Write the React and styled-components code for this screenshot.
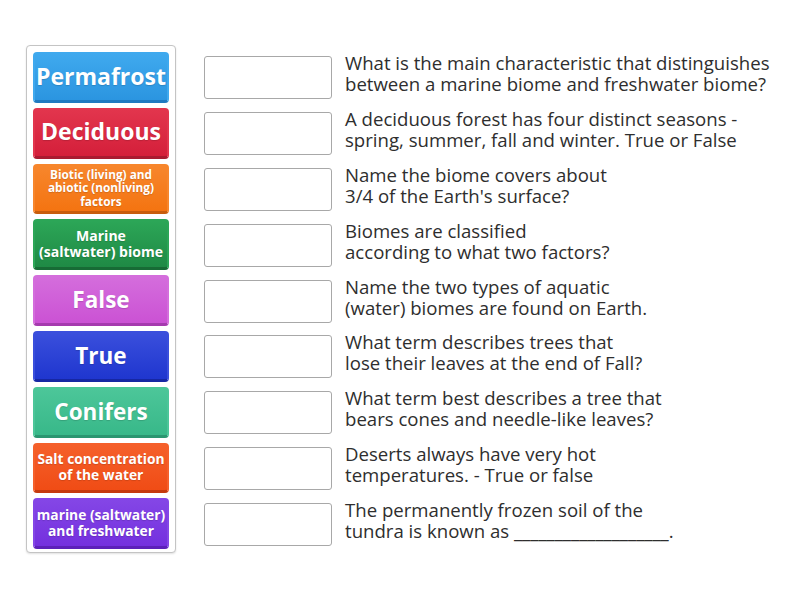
import React from "react";
import styled, { createGlobalStyle } from "styled-components";

const GlobalStyle = createGlobalStyle`
  body {
    margin: 0;
    background: #fff;
    font-family: "Open Sans", "Noto Sans", sans-serif;
  }
`;

const Page = styled.div`
  width: 800px;
  height: 600px;
  display: flex;
  align-items: flex-start;
  padding: 45px 0 0 26px;
  box-sizing: border-box;
`;

const Panel = styled.div`
  width: 150px;
  box-sizing: border-box;
  border: 1px solid #c4c4c4;
  border-radius: 4px;
  box-shadow: 0 1px 2px rgba(0, 0, 0, 0.12);
  padding: 6px 6px 3px 6px;
  display: flex;
  flex-direction: column;
  gap: 5px;
  background: #fff;
`;

const Tile = styled.div`
  height: 50.8px;
  box-sizing: border-box;
  border-radius: 4px;
  background: linear-gradient(180deg, ${({ top }) => top} 0%, ${({ color }) => color} 100%);
  border: 2px solid ${({ top }) => top};
  border-bottom: 3px solid ${({ dark }) => dark};
  color: #fff;
  font-weight: 700;
  font-size: ${({ size }) => size}px;
  line-height: ${({ size }) => (size > 18 ? 1.2 : 1.15)};
  display: flex;
  align-items: center;
  justify-content: center;
  text-align: center;
  white-space: pre-line;
  padding: 0 0 1px 0;
  text-shadow: 0 1px 1px rgba(0, 0, 0, 0.15);
`;

const Questions = styled.div`
  margin-left: 28px;
  padding-top: 7px;
  display: flex;
  flex-direction: column;
  gap: 5px;
`;

const Row = styled.div`
  height: 50.8px;
  display: flex;
  align-items: center;
`;

const Slot = styled.div`
  width: 128px;
  height: 43px;
  box-sizing: border-box;
  border: 1px solid #a8a8a8;
  border-radius: 3px;
  background: #fff;
  flex-shrink: 0;
  margin-top: 1px;
`;

const Question = styled.div`
  margin-left: 13px;
  font-size: 18.6px;
  line-height: 21px;
  color: #2e2e2e;
  white-space: pre;
  margin-bottom: 8px;
`;

const tiles = [
  { text: "Permafrost", size: 23, color: "#2b95e0", top: "#3fa9ee", dark: "#2079c0" },
  { text: "Deciduous", size: 23, color: "#d41f3a", top: "#e2354d", dark: "#a91a30" },
  { text: "Biotic (living) and\nabiotic (nonliving)\nfactors", size: 11.8, color: "#f47411", top: "#f7862c", dark: "#c85d0c" },
  { text: "Marine\n(saltwater) biome", size: 14, color: "#1f8a45", top: "#2ca657", dark: "#176b35" },
  { text: "False", size: 22.5, color: "#cb52d4", top: "#d46ddc", dark: "#a53aae" },
  { text: "True", size: 22.5, color: "#1f36cf", top: "#3a4fdc", dark: "#1627a3" },
  { text: "Conifers", size: 22.5, color: "#38b889", top: "#4cc699", dark: "#2a9670" },
  { text: "Salt concentration\nof the water", size: 13.8, color: "#f04c15", top: "#f5602b", dark: "#c53a0d" },
  { text: "marine (saltwater)\nand freshwater", size: 13.8, color: "#7430de", top: "#8446e6", dark: "#5c20b9" },
];

const questions = [
  "What is the main characteristic that distinguishes\nbetween a marine biome and freshwater biome?",
  "A deciduous forest has four distinct seasons -\nspring, summer, fall and winter. True or False",
  "Name the biome covers about\n3/4 of the Earth's surface?",
  "Biomes are classified\naccording to what two factors?",
  "Name the two types of aquatic\n(water) biomes are found on Earth.",
  "What term describes trees that\nlose their leaves at the end of Fall?",
  "What term best describes a tree that\nbears cones and needle-like leaves?",
  "Deserts always have very hot\ntemperatures. - True or false",
  "The permanently frozen soil of the\ntundra is known as ___________________.",
];

export default function App() {
  return (
    <>
      <GlobalStyle />
      <Page>
        <Panel>
          {tiles.map((t) => (
            <Tile key={t.text} size={t.size} color={t.color} top={t.top} dark={t.dark}>
              {t.text}
            </Tile>
          ))}
        </Panel>
        <Questions>
          {questions.map((q) => (
            <Row key={q}>
              <Slot />
              <Question>{q}</Question>
            </Row>
          ))}
        </Questions>
      </Page>
    </>
  );
}
